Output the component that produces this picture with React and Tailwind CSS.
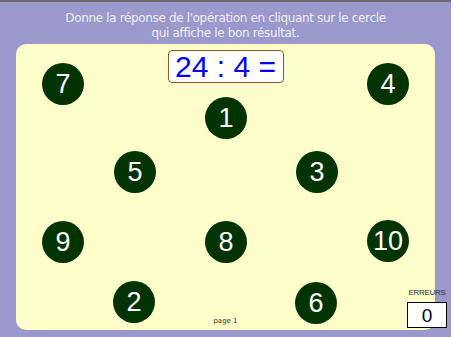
const circles = [
  { n: 7, left: 26, top: 19 },
  { n: 4, left: 351, top: 19 },
  { n: 1, left: 189, top: 53 },
  { n: 5, left: 98, top: 107 },
  { n: 3, left: 280, top: 107 },
  { n: 9, left: 26, top: 177 },
  { n: 8, left: 189, top: 177 },
  { n: 10, left: 351, top: 176 },
  { n: 2, left: 97, top: 237 },
  { n: 6, left: 279, top: 238 },
];

function Answer({ n, left, top }) {
  return (
    <button
      className="absolute w-[42px] h-[42px] rounded-full bg-[#003300] text-white flex items-center justify-center text-[27px] leading-none font-['Liberation_Sans',sans-serif]"
      style={{ left, top }}
    >
      {n}
    </button>
  );
}

export default function App() {
  return (
    <div className="flex w-[453px] h-[337px] bg-white overflow-hidden">
      <div className="relative w-[451px] h-full bg-[#9999cc] border-t-2 border-[#6b6b6b]">
        <p className="pt-[9px] text-center text-[12px] tracking-[-0.35px] leading-[15px] text-[#eeeef4] font-['DejaVu_Sans',sans-serif]">
          Donne la réponse de l'opération en cliquant sur le cercle
          <br />
          qui affiche le bon résultat.
        </p>

        <div className="relative mt-[3px] ml-[16px] w-[419px] h-[286px] rounded-[10px] bg-[#ffffcc] flex flex-col items-center">
          <div className="mt-[6px] w-[116px] h-[33px] bg-white border-[1.5px] border-[#8b5a2b] rounded-[4px] flex items-center justify-center text-[30px] leading-none text-[#0000ff] font-['Liberation_Sans',sans-serif] whitespace-pre">
            24 : 4 =
          </div>

          {circles.map((c) => (
            <Answer key={c.n} {...c} />
          ))}

          <span className="mt-auto mb-[4px] text-[7px] leading-[9px] text-[#333] font-['DejaVu_Sans',sans-serif]">
            page 1
          </span>
        </div>

        <div className="absolute left-[407px] top-[286px] flex flex-col items-center">
          <span className="text-[8px] leading-[10px] text-[#333] tracking-[-0.3px] font-['Liberation_Sans',sans-serif]">
            ERREURS
          </span>
          <div className="mt-[4px] w-[40px] h-[26px] bg-white border border-black flex items-center justify-center text-[19px] leading-none text-[#000033] font-['Liberation_Sans',sans-serif]">
            0
          </div>
        </div>
      </div>
    </div>
  );
}
